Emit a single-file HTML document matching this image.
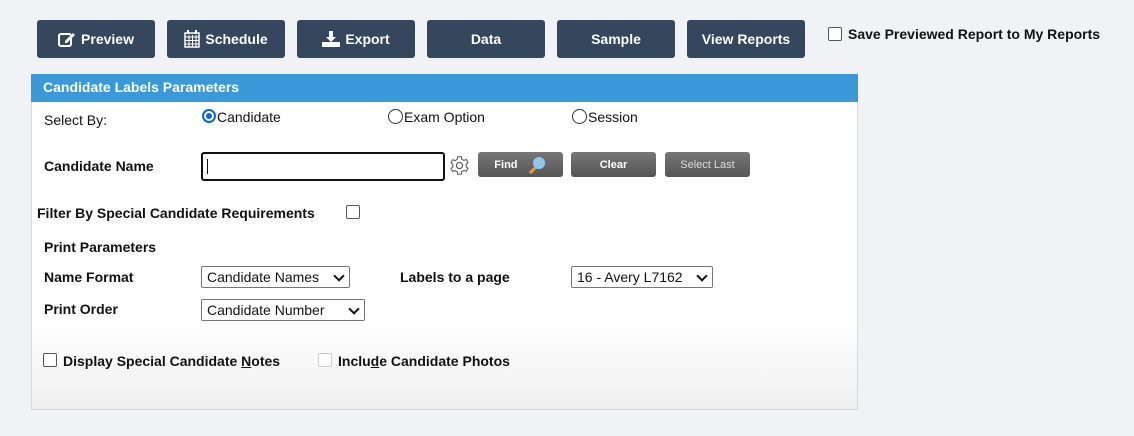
<!DOCTYPE html><html><head><style>
body{margin:0;width:1134px;height:436px;background:#f1f2f6;font-family:"Liberation Sans",sans-serif;position:relative;overflow:hidden;color:#111}
.a{position:absolute}
.btn{position:absolute;top:20px;height:38px;width:118px;background:#34475c;color:#fff;border-radius:3px;font-weight:bold;font-size:14px;display:flex;align-items:center;justify-content:center;gap:5px}
.lbl{position:absolute;font-size:14px}
.b{font-weight:bold}
.sel{position:absolute;height:22px;border:1px solid #767676;background:#fff;font-size:14px;box-sizing:border-box;padding-left:5px;line-height:20px;border-radius:2px}
.sel i{position:absolute;right:6px;top:5px;width:6px;height:6px;border-right:2px solid #111;border-bottom:2px solid #111;transform:rotate(45deg)}
.cb{position:absolute;width:12px;height:12px;border:1px solid #555;border-radius:2px;background:#fff}
.gb{position:absolute;top:152px;height:25px;border-radius:3px;background:linear-gradient(#777,#555);color:#fff;font-size:11px;font-weight:bold;display:flex;align-items:center;justify-content:center}
</style></head><body>
<div class="btn" style="left:37px"><svg width="18" height="16" viewBox="0 0 18 16"><rect x="1" y="3" width="12" height="12" rx="2" fill="none" stroke="#fff" stroke-width="2"/><path d="M7 10l8-8 2 2-8 8H7z" fill="#fff"/></svg>Preview</div>
<div class="btn" style="left:167px"><svg width="16" height="18" viewBox="0 0 16 18"><rect x="1" y="3" width="14" height="14" fill="none" stroke="#fff" stroke-width="1.5"/><rect x="3" y="0" width="2" height="4" fill="#fff"/><rect x="11" y="0" width="2" height="4" fill="#fff"/><path d="M1 7h14M1 10.5h14M1 14h14M5 5v12M8.5 5v12M12 5v12" stroke="#fff"/></svg>Schedule</div>
<div class="btn" style="left:297px"><svg width="18" height="16" viewBox="0 0 18 16"><path d="M7 0h4v6h3l-5 5-5-5h3z" fill="#fff"/><rect x="0" y="11" width="18" height="5" fill="#fff"/></svg>Export</div>
<div class="btn" style="left:427px">Data</div>
<div class="btn" style="left:557px">Sample</div>
<div class="btn" style="left:687px">View Reports</div>
<div class="cb" style="left:828px;top:27px"></div>
<div class="lbl b" style="left:848px;top:26px">Save Previewed Report to My Reports</div>
<div class="a" style="left:31px;top:74px;width:825px;height:334px;border:1px solid #d8d8d8;background:linear-gradient(#fff 0,#fff 248px,#efefef 334px)"></div>
<div class="a" style="left:31px;top:74px;width:827px;height:28px;background:#3a9ad9;color:#fff;font-weight:bold;font-size:14px;line-height:27px;padding-left:12px;box-sizing:border-box">Candidate Labels Parameters</div>
<div class="lbl" style="left:44px;top:112px">Select By:</div>
<div class="a" style="left:202px;top:109px;width:10px;height:10px;border:2px solid #0a66e0;border-radius:50%;background:#fff"><div style="margin:2px;width:6px;height:6px;border-radius:50%;background:#0a66e0"></div></div>
<div class="lbl" style="left:217px;top:109px">Candidate</div>
<div class="a" style="left:388px;top:109px;width:13px;height:13px;border:1px solid #333;border-radius:50%;background:#fff"></div>
<div class="lbl" style="left:404px;top:109px">Exam Option</div>
<div class="a" style="left:572px;top:109px;width:13px;height:13px;border:1px solid #333;border-radius:50%;background:#fff"></div>
<div class="lbl" style="left:588px;top:109px">Session</div>
<div class="lbl b" style="left:44px;top:158px">Candidate Name</div>
<div class="a" style="left:201px;top:152px;width:244px;height:29px;border:2px solid #111;border-radius:3px;box-sizing:border-box;background:#fff"><div style="position:absolute;left:4px;top:5px;width:1px;height:15px;background:#111"></div></div>
<svg class="a" style="left:449px;top:155px" width="21" height="21" viewBox="0 0 24 24"><circle cx="12" cy="12" r="3.5" fill="none" stroke="#555" stroke-width="1.3"/><path d="M10 2h4l.6 2.8 2.4 1.4 2.7-1 2 3.4-2.1 1.9v2.8l2.1 1.9-2 3.4-2.7-1-2.4 1.4L14 22h-4l-.6-2.8-2.4-1.4-2.7 1-2-3.4 2.1-1.9V10.7L2.3 8.8l2-3.4 2.7 1 2.4-1.4z" fill="none" stroke="#555" stroke-width="1.2"/></svg>
<div class="gb" style="left:478px;width:85px">Find&nbsp;&nbsp;&nbsp;<svg width="20" height="20" viewBox="0 0 20 20"><path d="M3 18l6-6" stroke="#e89a3c" stroke-width="3"/><circle cx="12" cy="8" r="6" fill="#8ec6f0"/></svg></div>
<div class="gb" style="left:571px;width:85px">Clear</div>
<div class="gb" style="left:665px;width:85px;color:#ddd;font-weight:normal">Select Last</div>
<div class="lbl b" style="left:37px;top:205px">Filter By Special Candidate Requirements</div>
<div class="cb" style="left:346px;top:205px"></div>
<div class="lbl b" style="left:44px;top:239px">Print Parameters</div>
<div class="lbl b" style="left:44px;top:269px">Name Format</div>
<div class="sel" style="left:201px;top:266px;width:149px">Candidate Names<i></i></div>
<div class="lbl b" style="left:400px;top:269px">Labels to a page</div>
<div class="sel" style="left:571px;top:266px;width:142px">16 - Avery L7162<i></i></div>
<div class="lbl b" style="left:44px;top:301px">Print Order</div>
<div class="sel" style="left:201px;top:299px;width:164px">Candidate Number<i></i></div>
<div class="cb" style="left:43px;top:353px"></div>
<div class="lbl b" style="left:63px;top:353px">Display Special Candidate <u>N</u>otes</div>
<div class="cb" style="left:318px;top:353px;border-color:#ccc"></div>
<div class="lbl b" style="left:338px;top:353px">Inclu<u>d</u>e Candidate Photos</div>
</body></html>
